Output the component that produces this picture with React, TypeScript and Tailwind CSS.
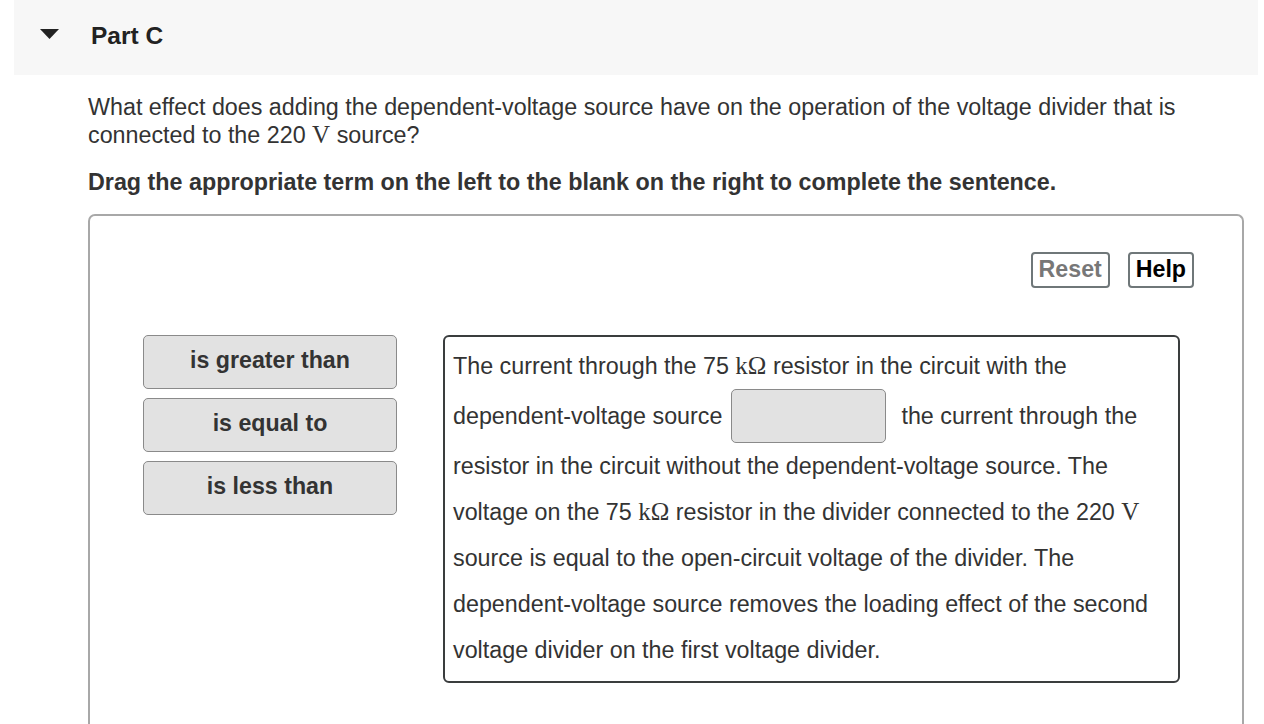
import React from "react";

const serif = { fontFamily: '"Liberation Serif", "DejaVu Serif", serif' };

function M({ children }: { children: React.ReactNode }) {
  return (
    <span className="text-[25px]" style={serif}>
      {children}
    </span>
  );
}

function Term({ label }: { label: string }) {
  return (
    <div className="flex h-[54px] w-[254px] items-center justify-center rounded-[5px] border border-[#8a8a8a] bg-[#e2e2e2] pb-[3px] text-[23.2px] font-bold text-[#333]">
      {label}
    </div>
  );
}

export default function App() {
  return (
    <div
      className="min-h-[724px] bg-white text-[#333]"
      style={{ fontFamily: '"Liberation Sans", Arial, Helvetica, sans-serif' }}
    >
      <div className="ml-[14px] mr-[6px] flex h-[75px] items-center bg-[#f7f7f7]">
        <svg width="19" height="10" viewBox="0 0 19 10" className="ml-[26px] mt-[-8px]">
          <polygon points="0,0 19,0 9.5,10" fill="#222" />
        </svg>
        <div className="ml-[32px] mt-[-2px] text-[24.5px] font-bold text-[#222]">Part C</div>
      </div>

      <div className="pl-[88px] pr-[21px]">
        <div className="mt-[18px] whitespace-nowrap text-[23.3px] leading-[28px] text-[#333]">
          What effect does adding the dependent-voltage source have on the operation of the voltage divider that is
          <br />
          connected to the 220 <M>V</M> source?
        </div>
        <div className="mt-[19px] whitespace-nowrap text-[23.3px] font-bold leading-[28px] text-[#333]">
          Drag the appropriate term on the left to the blank on the right to complete the sentence.
        </div>

        <div className="mt-[18px] h-[520px] w-[1156px] rounded-t-[7px] border-2 border-b-0 border-[#a8a8a8] pl-[53px] pr-[48px] pt-[36px]">
          <div className="flex justify-end gap-[18px]">
            <button className="h-[36px] rounded-[4px] border-2 border-[#6f7779] px-[6px] text-[23.2px] font-bold leading-none text-[#777]">
              Reset
            </button>
            <button className="h-[36px] rounded-[4px] border-2 border-[#6f7779] px-[6px] text-[23.2px] font-bold leading-none text-black">
              Help
            </button>
          </div>

          <div className="mt-[47px] flex gap-[46px]">
            <div className="flex flex-col gap-[9px]">
              <Term label="is greater than" />
              <Term label="is equal to" />
              <Term label="is less than" />
            </div>

            <div className="w-[737px] rounded-[6px] border-2 border-[#3a3d3e] pb-[8px] pl-[8px] pr-[4px] pt-[6px] text-[23.3px] text-[#333]">
              <div className="h-[46px] whitespace-nowrap leading-[46px]">
                The current through the 75 <M>kΩ</M> resistor in the circuit with the
              </div>
              <div className="flex h-[54px] items-center whitespace-nowrap">
                <span>dependent-voltage source</span>
                <span className="ml-[9px] mr-[15px] inline-block h-[54px] w-[155px] rounded-[5px] border border-[#8a8a8a] bg-[#e2e2e2]" />
                <span>the current through the</span>
              </div>
              <div className="h-[46px] whitespace-nowrap leading-[46px]">
                resistor in the circuit without the dependent-voltage source. The
              </div>
              <div className="h-[46px] whitespace-nowrap leading-[46px]">
                voltage on the 75 <M>kΩ</M> resistor in the divider connected to the 220 <M>V</M>
              </div>
              <div className="h-[46px] whitespace-nowrap leading-[46px]">
                source is equal to the open-circuit voltage of the divider. The
              </div>
              <div className="h-[46px] whitespace-nowrap leading-[46px]">
                dependent-voltage source removes the loading effect of the second
              </div>
              <div className="h-[46px] whitespace-nowrap leading-[46px]">
                voltage divider on the first voltage divider.
              </div>
            </div>
          </div>
        </div>
      </div>
    </div>
  );
}
